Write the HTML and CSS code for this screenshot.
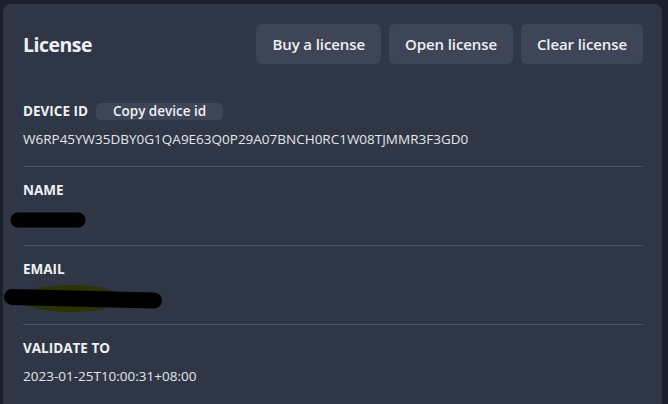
FILE: index.html
```html
<!DOCTYPE html>
<html lang="en">
<head>
<meta charset="utf-8">
<title>License</title>
<link rel="stylesheet" href="styles.css">
</head>
<body>
<div class="card">
  <div class="header">
    <h1 class="title">License</h1>
    <div class="actions">
      <button class="btn">Buy a license</button>
      <button class="btn">Open license</button>
      <button class="btn">Clear license</button>
    </div>
  </div>
  <div class="section first">
    <div class="label-row">
      <span class="label">DEVICE ID</span>
      <button class="pill">Copy device id</button>
    </div>
    <div class="value">W6RP45YW35DBY0G1QA9E63Q0P29A07BNCH0RC1W08TJMMR3F3GD0</div>
  </div>
  <div class="section">
    <div class="label-row"><span class="label">NAME</span></div>
    <div class="value redacted">
      <svg class="blob" width="90" height="20" viewBox="0 0 90 20" overflow="visible">
        <line x1="18" y1="12" x2="78" y2="12" stroke="#000" stroke-width="15" stroke-linecap="round"/>
      </svg>
    </div>
  </div>
  <div class="section">
    <div class="label-row"><span class="label">EMAIL</span></div>
    <div class="value redacted">
      <svg class="blob" width="170" height="20" viewBox="0 0 170 20" overflow="visible">
        <ellipse cx="71" cy="11.5" rx="51" ry="13.5" fill="#2c3200"/>
        <line x1="12" y1="10" x2="154" y2="13.5" stroke="#000" stroke-width="16" stroke-linecap="round"/>
      </svg>
    </div>
  </div>
  <div class="section last">
    <div class="label-row"><span class="label">VALIDATE TO</span></div>
    <div class="value">2023-01-25T10:00:31+08:00</div>
  </div>
</div>
</body>
</html>
```

FILE: styles.css
```css
html, body {
  margin: 0;
  padding: 0;
  background: #1b202c;
  width: 668px;
  height: 404px;
  overflow: hidden;
}

body {
  font-family: "Open Sans", "Noto Sans", sans-serif;
  color: #e6e9ee;
  padding: 4px 6px 0 3px;
  box-sizing: border-box;
}

.card {
  background: #2f3747;
  border-radius: 8px;
  padding: 20px 19px 20px 20px;
  height: 420px;
  box-sizing: border-box;
}

.header {
  display: flex;
  align-items: center;
  justify-content: space-between;
  height: 40px;
  margin-bottom: 37px;
}

.title {
  margin: 0;
  font-size: 19.5px;
  font-weight: 700;
  letter-spacing: -0.5px;
  color: #eef0f4;
}

.actions {
  display: flex;
  gap: 8px;
}

.btn {
  font-family: inherit;
  height: 40px;
  padding: 0 16px;
  border: none;
  border-radius: 6px;
  background: #3d4556;
  color: #eef0f4;
  font-size: 15px;
  font-weight: 600;
  letter-spacing: -0.1px;
}

.section {
  padding: 13px 0 17px;
  border-top: 1px solid #4a5264;
}

.section.first {
  border-top: none;
  padding-top: 0;
}

.label-row {
  display: flex;
  align-items: center;
  gap: 8px;
  height: 20px;
}

.label {
  font-size: 13.5px;
  font-weight: 700;
  line-height: 20px;
  color: #eef0f4;
}

.pill {
  font-family: inherit;
  height: 17px;
  padding: 0 17px;
  border: none;
  border-radius: 5px;
  background: #3d4556;
  color: #eef0f4;
  font-size: 13.5px;
  font-weight: 600;
  line-height: 17px;
}

.value {
  margin-top: 8px;
  font-size: 13.5px;
  line-height: 20px;
  height: 20px;
  color: #e2e6eb;
}

.redacted {
  margin-left: -23px;
}

.blob {
  display: block;
}
```
